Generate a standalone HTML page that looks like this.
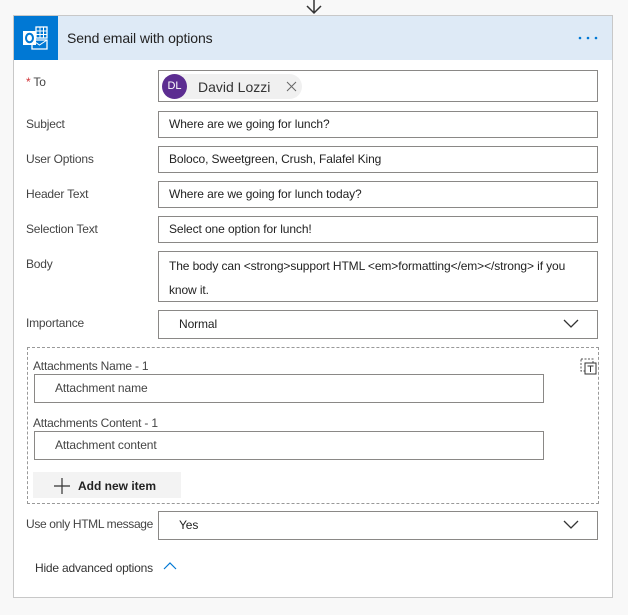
<!DOCTYPE html>
<html><head><style>
*{box-sizing:border-box;margin:0;padding:0}
body{width:628px;height:615px;background:#f8f8f8;font-family:"Liberation Sans",sans-serif;font-size:12px;color:#333;position:relative;overflow:hidden}
.a{position:absolute}
.card{left:13px;top:15px;width:600px;height:583px;background:#fff;border:1px solid #c8c8c8}
.hdr{left:14px;top:16px;width:598px;height:44px;background:#deeaf6}
.ico{left:14px;top:16px;width:44px;height:44px;background:#0078d4}
.lbl{left:26px;color:#444;font-size:12px;letter-spacing:-0.2px}
.in{left:158px;width:440px;border:1px solid #8a8886;background:#fff;padding:0 10px;line-height:24px;font-size:12px;color:#222;letter-spacing:-0.1px}
</style></head><body>
<svg class="a" style="left:304px;top:0" width="20" height="16"><path d="M10 0V13M3 6L10 13L17 6" stroke="#333" stroke-width="1.5" fill="none"/></svg>
<div class="a card"></div>
<div class="a hdr"></div>
<div class="a ico"><svg width="44" height="44"><rect x="22" y="11" width="11" height="11" fill="none" stroke="#fff" stroke-width="1.3"/><path d="M26 11v11M29.5 11v11M22 15h11M22 18.5h11" stroke="#fff" stroke-width="1"/><path d="M18 24h15v9H18z" fill="none" stroke="#fff" stroke-width="1.3"/><path d="M18 24l7.5 5 7.5-5" fill="none" stroke="#fff"/><rect x="9" y="15" width="13" height="14" fill="#fff"/><ellipse cx="15.5" cy="22" rx="3.5" ry="4.3" fill="none" stroke="#0078d4" stroke-width="2"/></svg></div>
<div class="a" style="left:67px;top:30px;font-size:14px;color:#222;letter-spacing:-0.1px">Send email with options</div>
<svg class="a" style="left:577px;top:35px" width="24" height="6"><circle cx="3" cy="3" r="1.3" fill="#0078d4"/><circle cx="11" cy="3" r="1.3" fill="#0078d4"/><circle cx="19" cy="3" r="1.3" fill="#0078d4"/></svg>

<div class="a lbl" style="top:75px"><span style="color:#d13438">*</span> To</div>
<div class="a in" style="top:70px;height:32px;padding:0"></div>
<div class="a" style="left:162px;top:74px;width:140px;height:25px;background:#f0f0f0;border-radius:13px"></div>
<div class="a" style="left:162px;top:74px;width:25px;height:25px;border-radius:50%;background:#5c2d91;color:#fff;font-size:11px;line-height:25px;text-align:center">DL</div>
<div class="a" style="left:198px;top:79px;font-size:14px;color:#333">David Lozzi</div>
<svg class="a" style="left:286px;top:81px" width="11" height="11"><path d="M1 1l9 9M10 1l-9 9" stroke="#666" stroke-width="1"/></svg>

<div class="a lbl" style="top:117px">Subject</div>
<div class="a in" style="top:111px;height:27px">Where are we going for lunch?</div>
<div class="a lbl" style="top:152px">User Options</div>
<div class="a in" style="top:146px;height:27px">Boloco, Sweetgreen, Crush, Falafel King</div>
<div class="a lbl" style="top:187px">Header Text</div>
<div class="a in" style="top:181px;height:27px">Where are we going for lunch today?</div>
<div class="a lbl" style="top:222px">Selection Text</div>
<div class="a in" style="top:216px;height:27px">Select one option for lunch!</div>
<div class="a lbl" style="top:257px">Body</div>
<div class="a in" style="top:251px;height:51px;line-height:24px;padding-top:2px">The body can &lt;strong&gt;support HTML &lt;em&gt;formatting&lt;/em&gt;&lt;/strong&gt; if you know it.</div>
<div class="a lbl" style="top:316px">Importance</div>
<div class="a in" style="top:310px;height:29px;line-height:27px;padding-left:20px">Normal</div>
<svg class="a" style="left:563px;top:319px" width="16" height="10"><path d="M1 1l7 7 7-7" stroke="#333" stroke-width="1.3" fill="none"/></svg>

<div class="a" style="left:27px;top:347px;width:572px;height:157px;border:1px dashed #999"></div>
<div class="a lbl" style="left:33px;top:359px">Attachments Name - 1</div>
<svg class="a" style="left:580px;top:358px" width="18" height="18"><rect x="1" y="1" width="12" height="12" fill="none" stroke="#555" stroke-dasharray="2 1.5"/><rect x="5" y="5" width="11" height="11" fill="#fff" stroke="#333"/><path d="M7.5 8h6M10.5 8v6" stroke="#333"/></svg>
<div class="a" style="left:34px;top:374px;width:510px;height:29px;border:1px solid #8a8886;padding-left:20px;line-height:27px;color:#444;letter-spacing:-0.1px">Attachment name</div>
<div class="a lbl" style="left:33px;top:416px">Attachments Content - 1</div>
<div class="a" style="left:34px;top:431px;width:510px;height:29px;border:1px solid #8a8886;padding-left:20px;line-height:27px;color:#444;letter-spacing:-0.1px">Attachment content</div>
<div class="a" style="left:33px;top:472px;width:148px;height:26px;background:#f3f3f3"></div>
<svg class="a" style="left:53px;top:477px" width="18" height="18"><path d="M9 1v16M1 9h16" stroke="#333" stroke-width="1.2"/></svg>
<div class="a" style="left:78px;top:479px;font-weight:bold;color:#222;font-size:12px">Add new item</div>

<div class="a lbl" style="top:517px;letter-spacing:-0.35px">Use only HTML message</div>
<div class="a in" style="top:511px;height:29px;line-height:27px;padding-left:20px">Yes</div>
<svg class="a" style="left:563px;top:520px" width="16" height="10"><path d="M1 1l7 7 7-7" stroke="#333" stroke-width="1.3" fill="none"/></svg>

<div class="a" style="left:35px;top:561px;color:#333;letter-spacing:-0.2px">Hide advanced options</div>
<svg class="a" style="left:163px;top:562px" width="14" height="9"><path d="M1 7l6-6 6 6" stroke="#0078d4" stroke-width="1.2" fill="none"/></svg>
</body></html>
